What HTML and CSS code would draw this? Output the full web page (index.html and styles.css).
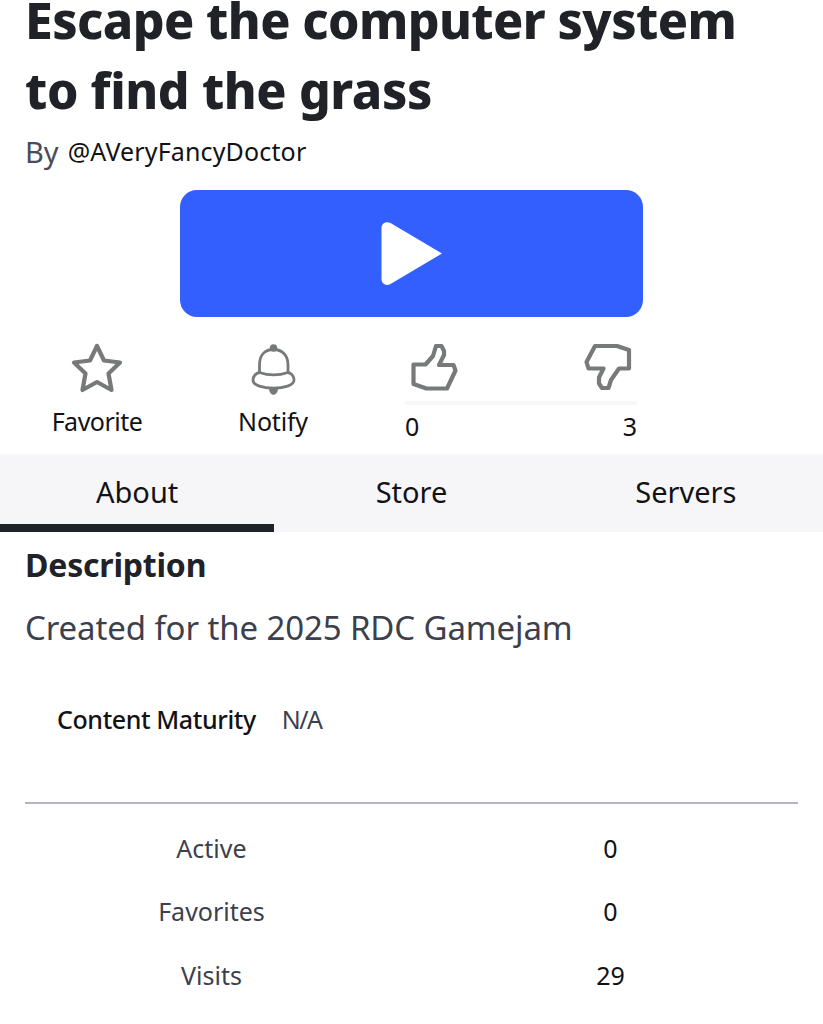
FILE: index.html
```html
<!DOCTYPE html>
<html lang="en">
<head>
    <meta charset="UTF-8" />
    <title>Escape the computer system to find the grass</title>
    <meta name="viewport" content="width=device-width, initial-scale=1" />
    <link rel="stylesheet" href="styles.css">
</head>
<body>
    <header class="game-header">
        <h1 class="game-title"><span class="title-top">Escape the computer system</span><br><span class="title-end">to find the grass</span></h1>
        <div class="creator">
            <span class="by">By</span>
            <a class="creator-name" href="#">@AVeryFancyDoctor</a>
        </div>
    </header>

    <button class="play-btn" aria-label="Play">
        <svg width="61" height="64" viewBox="0 0 61 64">
            <path d="M0.500 6C0.500 1 5.500 -1 9.500 1L61 31.500L9.500 62C5.500 64.500 0.500 62 0.500 57Z" fill="#fff"/>
        </svg>
    </button>

    <!-- Favorite / notify / votes -->
    <div class="actions">
        <div class="action">
            <svg class="icon" width="54" height="54" viewBox="0 0 54 54">
                <path d="M27 4L34 18.500L50 20.500L38.500 31.500L41.500 48L27 40L12.500 48L15.500 31.500L4 20.500L20 18.500Z"/>
            </svg>
            <span class="label favorite">Favorite</span>
        </div>
        <div class="action">
            <svg class="icon bell" width="54" height="54" viewBox="0 0 54 54">
                <circle class="solid" cx="27.500" cy="6" r="3.800"/>
                <path class="solid" d="M23 46H32C32 55 23 55 23 46Z"/>
                <path d="M13.500 30.500V23C13.500 13 19 7.500 27.500 7.500S42 13 42 23V30.500"/>
                <path d="M13.500 30.500C22 33.500 33 33.500 42 30.500C45 31 48 34 48 38C48 49 7 49 7 38C7 34 10 31 13.500 30.500Z"/>
            </svg>
            <span class="label notify">Notify</span>
        </div>
        <div class="votes">
            <div class="vote-icons">
                <svg class="icon" width="60" height="58" viewBox="0 0 60 58">
                    <path d="M8.500 21.500H20.500L28 13L31 3H36.500L39 8V12L34 22H48.500L50.500 27.500L42 45.500H21.500L8.500 41Z"/>
                </svg>
                <svg class="icon" width="60" height="58" viewBox="0 0 60 58">
                    <path d="M15 3H37L49 7V25.500H39L31 37L28.500 45H22L19 40.500V34.500L23.500 25.500H8.500L6.500 19Z"/>
                </svg>
            </div>
            <div class="vote-bar"></div>
            <div class="vote-counts">
                <span>0</span>
                <span>3</span>
            </div>
        </div>
    </div>

    <nav class="tabs">
        <a class="tab active" href="#">About</a>
        <a class="tab" href="#">Store</a>
        <a class="tab" href="#">Servers</a>
    </nav>

    <main class="about">
        <h2 class="section-title">Description</h2>
        <p class="description">Created for the 2025 RDC Gamejam</p>
        <div class="maturity">
            <span class="maturity-label">Content Maturity</span>
            <span class="maturity-value">N/A</span>
        </div>
        <dl class="stats">
            <dt>Active</dt><dd>0</dd>
            <dt>Favorites</dt><dd>0</dd>
            <dt>Visits</dt><dd>29</dd>
        </dl>
    </main>
</body>
</html>
```
FILE: styles.css
```css
html, body {
    margin: 0;
    padding: 0;
    overflow: hidden;
}
body {
    display: flow-root;
    height: 1024px;
    font-family: 'Noto Sans', sans-serif;
    font-size: 25px;
    color: #121215;
    background: #fff;
}
a {
    color: inherit;
    text-decoration: none;
}
.game-header {
    margin: -14px 25px 0;
}
.game-title {
    margin: 0;
    font-size: 50px;
    line-height: 69.5px;
    font-weight: 800;
    color: #202227;
    white-space: nowrap;
}
.title-top {
    letter-spacing: -0.59px;
}
.title-end {
    letter-spacing: -0.4px;
}
.creator {
    display: flex;
    gap: 9px;
    height: 39px;
    margin-top: 8px;
}
.by {
    font-size: 29px;
    line-height: 37px;
    color: #494d5a;
}
.creator-name {
    line-height: 37px;
    letter-spacing: 0.15px;
}
.play-btn {
    display: flex;
    align-items: center;
    justify-content: center;
    width: 463px;
    height: 127px;
    margin: 18px 0 0 180px;
    padding: 0;
    border: none;
    border-radius: 17px;
    background: #335fff;
    cursor: pointer;
}
.actions {
    display: grid;
    grid-template-columns: 176px 176px 232px;
    height: 137px;
    padding-left: 9px;
}
.action {
    display: flex;
    flex-direction: column;
    align-items: center;
    padding-top: 25px;
}
.label {
    line-height: 34px;
    margin-top: 8px;
}
.favorite {
    letter-spacing: -0.5px;
}
.notify {
    letter-spacing: -0.2px;
}
.icon {
    display: block;
    fill: none;
    stroke: #77797b;
    stroke-width: 4.2;
    stroke-linejoin: round;
}
.bell {
    stroke-width: 2.8;
}
.icon .solid {
    fill: #77797b;
    stroke: none;
}
.votes {
    margin-left: 44px;
    width: 232px;
    padding-top: 26px;
}
.vote-icons {
    display: flex;
    justify-content: space-between;
}
.vote-icons .icon:last-child {
    margin-right: -3px;
}
.vote-bar {
    height: 4px;
    background: #f7f7f8;
}
.vote-counts {
    display: flex;
    justify-content: space-between;
    line-height: 42px;
}
/* Tab bar */
.tabs {
    display: grid;
    grid-template-columns: repeat(3, 1fr);
    height: 78px;
    background: #f6f6f9;
}
.tab {
    box-sizing: border-box;
    height: 78px;
    text-align: center;
    font-size: 29px;
    line-height: 75px;
}
.tab.active {
    border-bottom: 8px solid #202227;
}
.about {
    padding: 0 25px;
}
.section-title {
    margin: 0;
    padding-top: 10px;
    font-size: 32px;
    line-height: 45px;
    letter-spacing: -0.2px;
    font-weight: 700;
    color: #202227;
}
.description {
    margin: 17px 0 0;
    font-size: 33px;
    line-height: 48px;
    letter-spacing: -0.12px;
    color: #3c404d;
}
.maturity {
    display: flex;
    gap: 26px;
    height: 101px;
    padding: 49px 0 0 32px;
    line-height: 37px;
}
.maturity-label {
    font-weight: 500;
    letter-spacing: -0.4px;
}
.maturity-value {
    letter-spacing: -1.5px;
    color: #3c404d;
}
/* Stats list */
.stats {
    display: grid;
    grid-template-columns: 373px 425px;
    margin: 0;
    padding-top: 13px;
    border-top: 2px solid #b4b5c0;
    line-height: 63.3px;
    text-align: center;
}
.stats dt {
    color: #3c404d;
}
.stats dd {
    margin: 0;
}
```
